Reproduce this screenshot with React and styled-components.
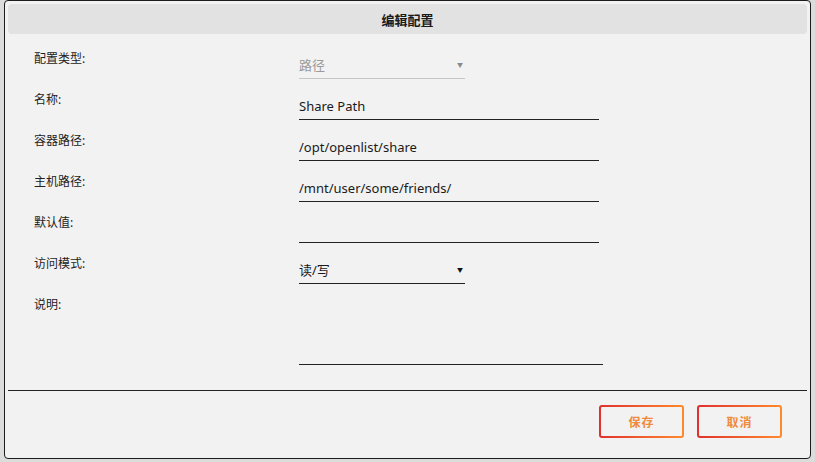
import React from "react";
import styled, { createGlobalStyle } from "styled-components";

const Global = createGlobalStyle`
  html, body {
    margin: 0;
    padding: 0;
    background: #dcdcdc;
  }
  body {
    font-family: "Noto Sans", "Noto Sans CJK SC", sans-serif;
  }
`;

const Modal = styled.div`
  box-sizing: border-box;
  margin: 0 4px;
  height: 459px;
  border: 1px solid #1c1c1c;
  border-radius: 4px;
  background: #f2f2f2;
  padding: 3px;
  display: flex;
  flex-direction: column;
`;

const Header = styled.div`
  height: 30px;
  border-radius: 4px;
  background: #e2e2e2;
  display: flex;
  align-items: center;
  justify-content: center;
  font-size: 13px;
  font-weight: 700;
  color: #1a1a1a;
`;

const Form = styled.div`
  padding: 16px 0 0 26px;
  display: flex;
  flex-direction: column;
`;

const Row = styled.div`
  display: grid;
  grid-template-columns: 265px 1fr;
  height: ${(p) => (p.$tall ? "94px" : "41px")};
`;

const Label = styled.div`
  font-size: 12px;
  line-height: 18px;
  color: #222;
`;

const Field = styled.input`
  box-sizing: border-box;
  margin-top: 5px;
  width: 300px;
  height: 24px;
  border: none;
  border-bottom: 1px solid #222;
  background: transparent;
  padding: 0 0 4px;
  font-family: inherit;
  font-size: 13px;
  color: #1a1a1a;
  outline: none;
`;

const Area = styled.textarea`
  box-sizing: border-box;
  margin-top: 5px;
  width: 304px;
  height: 64px;
  border: none;
  border-bottom: 1px solid #222;
  background: transparent;
  resize: none;
  padding: 0;
  font-family: inherit;
  font-size: 13px;
  outline: none;
`;

const Select = styled.div`
  box-sizing: border-box;
  margin-top: 5px;
  width: 166px;
  height: 24px;
  display: flex;
  align-items: center;
  justify-content: space-between;
  padding: 0 2px 4px 0;
  border-bottom: 1px solid ${(p) => (p.$disabled ? "#c6c6c6" : "#222")};
  font-size: 13px;
  color: ${(p) => (p.$disabled ? "#9a9a9a" : "#1a1a1a")};
`;

const Arrow = styled.span`
  font-size: 6px;
  color: ${(p) => (p.$disabled ? "#8a8a8a" : "#111")};
`;

const Divider = styled.div`
  height: 1px;
  background: #222;
`;

const Footer = styled.div`
  display: flex;
  justify-content: flex-end;
  gap: 13px;
  padding: 14px 25px 0 0;
`;

const Button = styled.button`
  box-sizing: border-box;
  width: 85px;
  height: 33px;
  border: 2px solid transparent;
  border-radius: 3px;
  background: linear-gradient(#f2f2f2, #f2f2f2) padding-box,
    linear-gradient(90deg, #e0302e, #ff8a2c) border-box;
  font-family: inherit;
  font-size: 12px;
  font-weight: 700;
  letter-spacing: 1px;
  color: #ef8a3c;
  cursor: pointer;
`;

const fields = [
  { label: "名称:", value: "Share Path" },
  { label: "容器路径:", value: "/opt/openlist/share" },
  { label: "主机路径:", value: "/mnt/user/some/friends/" },
  { label: "默认值:", value: "" },
];

export default function App() {
  return (
    <>
      <Global />
      <Modal>
        <Header>编辑配置</Header>
        <Form>
          <Row>
            <Label>配置类型:</Label>
            <Select $disabled>
              路径
              <Arrow $disabled>▼</Arrow>
            </Select>
          </Row>
          {fields.map((f) => (
            <Row key={f.label}>
              <Label>{f.label}</Label>
              <Field readOnly value={f.value} />
            </Row>
          ))}
          <Row>
            <Label>访问模式:</Label>
            <Select>
              读/写
              <Arrow>▼</Arrow>
            </Select>
          </Row>
          <Row $tall>
            <Label>说明:</Label>
            <Area readOnly value="" />
          </Row>
        </Form>
        <Divider />
        <Footer>
          <Button>保存</Button>
          <Button>取消</Button>
        </Footer>
      </Modal>
    </>
  );
}
